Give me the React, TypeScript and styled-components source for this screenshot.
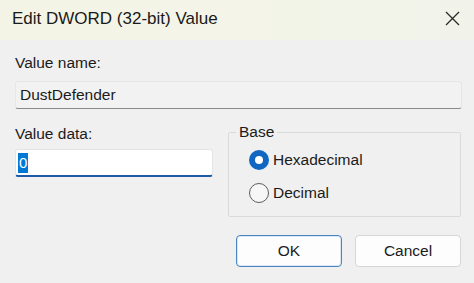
import React from 'react';
import styled, {createGlobalStyle} from "styled-components";

const GlobalStyle = createGlobalStyle`
  html, body {
    margin: 0;
    padding: 0;
    background: #f0f0f0;
  }
  * {
    box-sizing: border-box;
  }
`

const Window = styled.div`
  width: 474px;
  height: 283px;
  display: flex;
  flex-direction: column;
  background: #f0f0f0;
  font-family: "Liberation Sans", Arial, sans-serif;
  color: #1b1b1b;
  overflow: hidden;
`

const TitleBar = styled.div`
  height: 40px;
  display: flex;
  align-items: center;
  justify-content: space-between;
  padding: 0 14px 0 12px;
  background: linear-gradient(90deg, #f3f4e6 0%, #f4f5e8 50%, #f1f3ea 100%);
`

const Title = styled.span`
  font-size: 17px;
  color: #1a1a1a;
  margin-top: -3px;
`

const CloseButton = styled.div`
  width: 16px;
  height: 16px;
  display: flex;
  align-items: center;
  justify-content: center;
  margin-top: -4px;
`

const Body = styled.div`
  flex: 1;
  display: flex;
  flex-direction: column;
  padding: 14px 13px 0 15px;
`

const Label = styled.div`
  font-size: 15.5px;
  line-height: 18px;
  color: #1b1b1b;
`

const NameBox = styled.div`
  margin-top: 9px;
  height: 28px;
  width: 447px;
  display: flex;
  align-items: center;
  padding-left: 4px;
  font-size: 15.5px;
  background: #f2f2f2;
  border: 1px solid #e6e6e6;
  border-bottom: 1px solid #8a8a8a;
  border-radius: 3px;
`

const Row = styled.div`
  display: flex;
  align-items: flex-start;
  margin-top: 14px;
  gap: 15px;
`

const DataColumn = styled.div`
  display: flex;
  flex-direction: column;
  width: 198px;
  padding-top: 2px;
`

const DataInput = styled.div`
  margin-top: 6px;
  height: 28px;
  display: flex;
  align-items: center;
  padding-left: 2px;
  background: #ffffff;
  border: 1px solid #e4e4e4;
  border-bottom: 2px solid #1e5aa8;
  border-radius: 3px;
`

const Selection = styled.span`
  background: #0078d4;
  color: #ffffff;
  font-size: 15px;
  line-height: 20px;
  padding: 0 1px;
`

const GroupBox = styled.fieldset`
  margin: 0;
  width: 233px;
  height: 94px;
  padding: 9px 0 0 20px;
  border: 1px solid #dadada;
  border-radius: 2px;
  display: flex;
  flex-direction: column;
  gap: 13px;

  legend {
    font-size: 15.5px;
    padding: 0 3px;
    margin-left: -13px;
    color: #1b1b1b;
  }
`

const RadioRow = styled.div`
  display: flex;
  align-items: center;
  gap: 4px;
  font-size: 15.5px;
`

const RadioDot = styled.span<{ checked?: boolean }>`
  width: 20px;
  height: 20px;
  border-radius: 50%;
  display: inline-flex;
  align-items: center;
  justify-content: center;
  background: ${({checked}) => checked ? '#0f67c1' : '#f7f7f7'};
  border: ${({checked}) => checked ? 'none' : '1px solid #5c5c5c'};

  &::after {
    content: "";
    width: 8px;
    height: 8px;
    border-radius: 50%;
    background: #ffffff;
    display: ${({checked}) => checked ? 'block' : 'none'};
  }
`

const Footer = styled.div`
  display: flex;
  justify-content: flex-end;
  gap: 13px;
  margin-top: 18px;
`

const Button = styled.button<{ primary?: boolean }>`
  width: 106px;
  height: 32px;
  font-family: "Liberation Sans", Arial, sans-serif;
  font-size: 15.5px;
  color: #1b1b1b;
  background: #fdfdfd;
  border: 1px solid ${({primary}) => primary ? '#4a86c0' : '#d6d6d6'};
  box-shadow: ${({primary}) => primary ? 'inset 0 0 0 1px #d9e7f4' : 'none'};
  border-radius: 4px;
  padding: 0;
`

function App() {
    return (
        <Window>
            <GlobalStyle/>
            <TitleBar>
                <Title>Edit DWORD (32-bit) Value</Title>
                <CloseButton>
                    <svg width="15" height="15" viewBox="0 0 15 15">
                        <path d="M1 1 L14 14 M14 1 L1 14" stroke="#2a2a2a" strokeWidth="1.3" fill="none"/>
                    </svg>
                </CloseButton>
            </TitleBar>
            <Body>
                <Label>Value name:</Label>
                <NameBox>DustDefender</NameBox>
                <Row>
                    <DataColumn>
                        <Label>Value data:</Label>
                        <DataInput><Selection>0</Selection></DataInput>
                    </DataColumn>
                    <GroupBox>
                        <legend>Base</legend>
                        <RadioRow><RadioDot checked/>Hexadecimal</RadioRow>
                        <RadioRow><RadioDot/>Decimal</RadioRow>
                    </GroupBox>
                </Row>
                <Footer>
                    <Button primary>OK</Button>
                    <Button>Cancel</Button>
                </Footer>
            </Body>
        </Window>
    );
}

export default App;
